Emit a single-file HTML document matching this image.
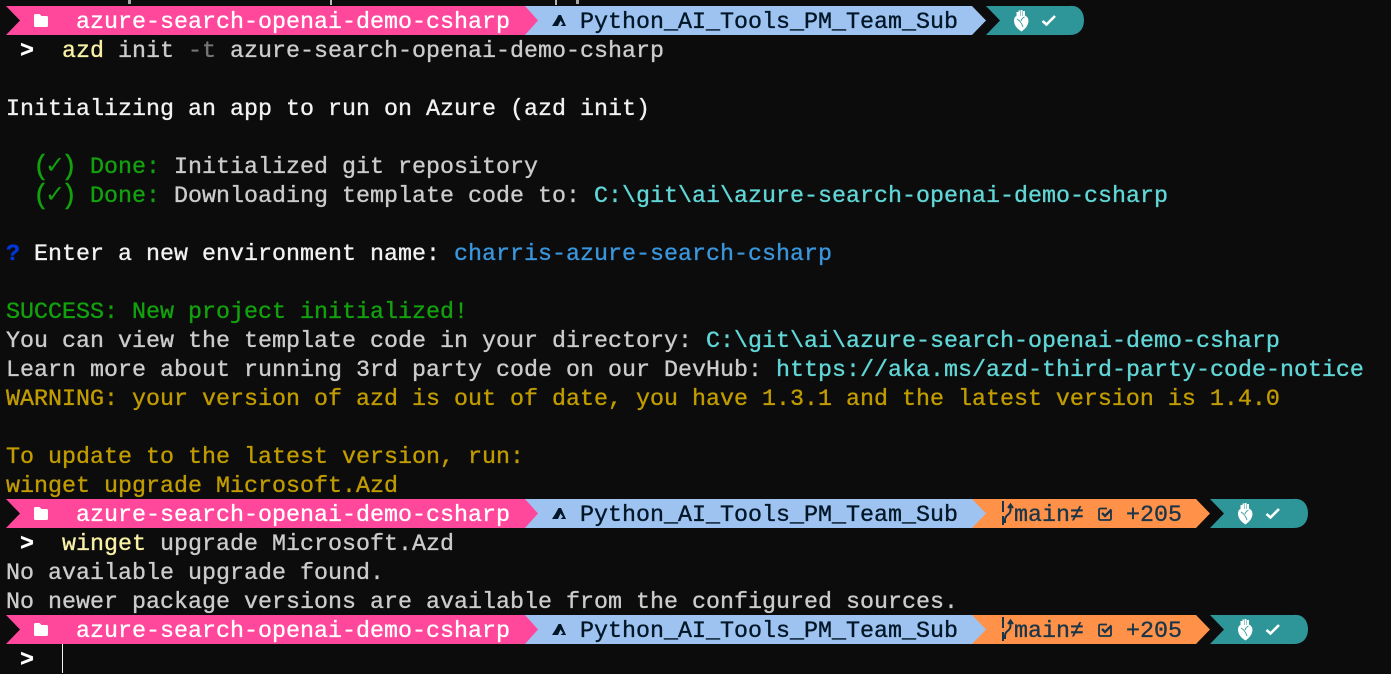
<!DOCTYPE html>
<html lang="en">
<head>
<meta charset="utf-8">
<title>Terminal</title>
<style>
html,body{margin:0;padding:0;background:#0c0c0c;width:1391px;height:674px;overflow:hidden}
#w{position:relative;width:1391px;height:674px;overflow:hidden;background:#0c0c0c}
#g{position:absolute;left:0;top:0}
.r{position:absolute;left:6px;height:29px;line-height:35px;font-family:"Liberation Mono","DejaVu Sans Mono",monospace;font-size:23.33px;white-space:pre;color:#ccc;-webkit-text-stroke:.35px currentColor}
.w{color:#f2f2f2}.gn{color:#13a10e}.c{color:#61d6d6}.y{color:#c19c00}.az{color:#f9f1a5}.d{color:#767676}.b{color:#3a96dd}.q{color:#0037da;font-weight:bold}
.p{color:#fff;font-weight:bold}
.k{display:inline-block;width:20px;margin:0 -3px;text-align:center;font-family:"DejaVu Sans",sans-serif;font-size:24px;line-height:20px;-webkit-text-stroke:0}
.pr{display:inline-block;transform:scale(1.15,1.2)}
.t{position:absolute;height:29px;line-height:35px;font-family:"Liberation Mono","DejaVu Sans Mono",monospace;font-size:23.33px;white-space:pre;-webkit-text-stroke:.35px currentColor}
.tw{color:#fff}.tb{color:#011627}.to{color:#193549}
.cur{position:absolute;left:62px;top:644px;width:1px;height:29px;background:#f2f2f2}
</style>
</head>
<body>
<div id="w">
<svg id="g" width="1391" height="674" viewBox="0 0 1391 674" xmlns="http://www.w3.org/2000/svg">
<defs>
<g id="base">
<polygon fill="#9ec3f0" points="524,6 972,6 986,20.5 972,35 524,35"/>
<polygon fill="#ff479c" points="6,6 525,6 538,20.5 525,35 6,35 20,20.5"/>
<path fill="#fff" d="M34 15.500Q34 14 35.500 14H39.500L41.500 16H46.500Q48 16 48 17.500V25.500Q48 27 46.500 27H35.500Q34 27 34 25.500Z"/>
<path fill="#011627" d="M558.500 15H561L566 26H560.500L563 24L560.500 20.500L558 26H552L555.500 20.500Z"/>
</g>
<g id="heart">
<path fill="#fff" d="M1016.500 16V12H1018.500V10.500H1020V16H1020.500V10H1022.500V16H1023V11H1025V15.500Q1028.500 17 1028.500 21.500Q1028 27 1021.500 31.500Q1014 27 1014 20.500Q1014 17 1016.500 16Z"/>
<path fill="none" stroke="#2e9599" stroke-width=".9" d="M1017 19Q1021 21 1023 27M1024.500 17Q1021.500 18.500 1021 21"/>
<path fill="none" stroke="#fff" stroke-width="2.600" d="M1042.500 21L1046.500 24.500L1055 16"/>
</g>
<g id="rep">
<use href="#base"/>
<polygon fill="#ff9248" points="972,6 1196,6 1210,20.500 1196,35 972,35"/>
<polygon fill="#9ec3f0" points="972,6 986,20.500 972,35"/>
<path fill="none" stroke="#193549" stroke-width="2" d="M1003 8V19M1003 23V32M1010.500 12V17Q1010.500 20 1007.500 22Q1005 24 1005 27V30M1008 15L1010.500 11.500L1013 15"/>
<path fill="none" stroke="#193549" stroke-width="1.800" d="M1107 15.500H1100.500Q1099 15.500 1099 17V25.500Q1099 27 1100.500 27H1109.500Q1111 27 1111 25.500V18"/>
<path fill="none" stroke="#193549" stroke-width="2.300" d="M1102 20L1105 23L1111.500 16.500"/>
<path fill="#2e9599" d="M1210 6H1294C1303 5 1308 12 1308 20C1308 29 1303 35 1294 35H1210L1224 20.500Z"/>
<use href="#heart" x="224"/>
</g>
</defs>
<rect x="128" y="0" width="3" height="4" fill="#a8a8a8"/>
<rect x="330" y="0" width="2" height="5" fill="#b8b8b8"/>
<rect x="555" y="0" width="2" height="5" fill="#b8b8b8"/>
<rect x="576" y="0" width="3" height="4" fill="#a8a8a8"/>
<use href="#base"/>
<path fill="#2e9599" d="M986 6H1070C1079 5 1084 12 1084 20C1084 29 1079 35 1070 35H986L1000 20.500Z"/>
<use href="#heart"/>
<use href="#rep" y="493"/>
<use href="#rep" y="609"/>
</svg>

<div class="t tw" style="left:76px;top:6px">azure-search-openai-demo-csharp</div>
<div class="t tb" style="left:580px;top:6px">Python_AI_Tools_PM_Team_Sub</div>

<div class="r" style="top:35px"> <span class="p">&gt;</span>  <span class="az">azd</span> init <span class="d">-t</span> azure-search-openai-demo-csharp</div>
<div class="r w" style="top:93px">Initializing an app to run on Azure (azd init)</div>
<div class="r" style="top:151px">  <span class="gn"><span class="pr">(</span><span class="k">✓</span><span class="pr">)</span> Done:</span> Initialized git repository</div>
<div class="r" style="top:180px">  <span class="gn"><span class="pr">(</span><span class="k">✓</span><span class="pr">)</span> Done:</span> Downloading template code to: <span class="c">C:\git\ai\azure-search-openai-demo-csharp</span></div>
<div class="r w" style="top:238px"><span class="q">?</span> Enter a new environment name: <span class="b">charris-azure-search-csharp</span></div>
<div class="r gn" style="top:296px">SUCCESS: New project initialized!</div>
<div class="r" style="top:325px">You can view the template code in your directory: <span class="c">C:\git\ai\azure-search-openai-demo-csharp</span></div>
<div class="r" style="top:354px">Learn more about running 3rd party code on our DevHub: <span class="c">https://aka.ms/azd-third-party-code-notice</span></div>
<div class="r y" style="top:383px">WARNING: your version of azd is out of date, you have 1.3.1 and the latest version is 1.4.0</div>
<div class="r y" style="top:441px">To update to the latest version, run:</div>
<div class="r y" style="top:470px">winget upgrade Microsoft.Azd</div>

<div class="t tw" style="left:76px;top:499px">azure-search-openai-demo-csharp</div>
<div class="t tb" style="left:580px;top:499px">Python_AI_Tools_PM_Team_Sub</div>
<div class="t to" style="left:1014px;top:499px">main≠</div>
<div class="t to" style="left:1126px;top:499px">+205</div>

<div class="r" style="top:528px"> <span class="p">&gt;</span>  <span class="az">winget</span> upgrade Microsoft.Azd</div>
<div class="r" style="top:557px">No available upgrade found.</div>
<div class="r" style="top:586px">No newer package versions are available from the configured sources.</div>

<div class="t tw" style="left:76px;top:615px">azure-search-openai-demo-csharp</div>
<div class="t tb" style="left:580px;top:615px">Python_AI_Tools_PM_Team_Sub</div>
<div class="t to" style="left:1014px;top:615px">main≠</div>
<div class="t to" style="left:1126px;top:615px">+205</div>

<div class="r" style="top:644px"> <span class="p">&gt;</span></div>
<div class="cur"></div>
</div>
</body>
</html>
